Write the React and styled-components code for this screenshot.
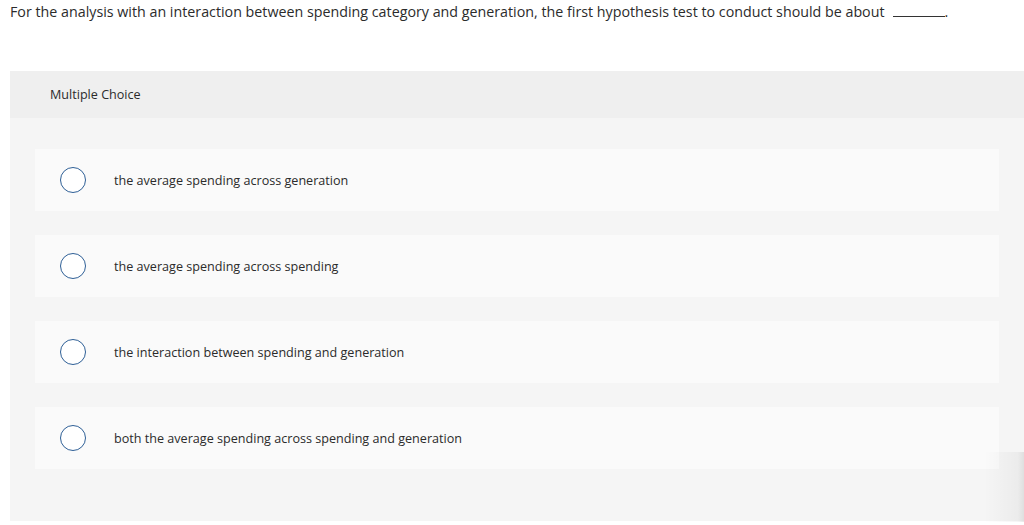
import React from 'react';
import styled, { createGlobalStyle } from 'styled-components';

const GlobalStyle = createGlobalStyle`
    html, body {
        margin: 0;
        padding: 0;
        background: #ffffff;
        font-family: "Open Sans", "Liberation Sans", sans-serif;
        color: #2b2b2b;
        overflow: hidden;
    }
`;

const Page = styled.div`
    width: 1024px;
    height: 525px;
    position: relative;
    overflow: hidden;
`;

const Question = styled.div`
    padding: 3px 0 0 10px;
    height: 71px;
    box-sizing: border-box;
    font-size: 14.28px;
    line-height: 18px;
    color: #2b2b2b;
`;

const Blank = styled.span`
    display: inline-block;
    width: 52px;
    margin-left: 8px;
    border-bottom: 1px solid #333;
    height: 13px;
`;

const Panel = styled.div`
    margin-left: 10px;
    width: 1030px;
    background: #f5f5f5;
    height: 450px;
`;

const PanelHeader = styled.div`
    height: 47px;
    background: #efefef;
    display: flex;
    align-items: center;
    padding-left: 40px;
    font-size: 12.6px;
    color: #2b2b2b;
`;

const OptionList = styled.div`
    display: flex;
    flex-direction: column;
    gap: 24px;
    padding: 31px 0 0 25px;
`;

const Option = styled.div`
    width: 964px;
    height: 62px;
    background: #fafafa;
    display: flex;
    align-items: center;
    box-sizing: border-box;
    padding-left: 25px;
`;

const Radio = styled.span`
    width: 24px;
    height: 24px;
    border: 1.5px solid #2e5f96;
    border-radius: 50%;
    background: #fff;
    flex-shrink: 0;
`;

const OptionText = styled.span`
    margin-left: 28px;
    font-size: 12.6px;
    color: #2b2b2b;
`;

const EdgeShadow = styled.div`
    position: absolute;
    right: 0;
    top: 452px;
    width: 40px;
    height: 70px;
    background: linear-gradient(to right, rgba(0,0,0,0), rgba(0,0,0,0.04) 85%, rgba(0,0,0,0.09));
`;

const options = [
    'the average spending across generation',
    'the average spending across spending',
    'the interaction between spending and generation',
    'both the average spending across spending and generation',
];

function App() {
    return (
        <Page>
            <GlobalStyle />
            <Question>
                For the analysis with an interaction between spending category and generation, the first hypothesis test to conduct should be about
                <Blank />.
            </Question>
            <Panel>
                <PanelHeader>Multiple Choice</PanelHeader>
                <OptionList>
                    {options.map((o) => (
                        <Option key={o}>
                            <Radio />
                            <OptionText>{o}</OptionText>
                        </Option>
                    ))}
                </OptionList>
            </Panel>
            <EdgeShadow />
        </Page>
    );
}

export default App;
